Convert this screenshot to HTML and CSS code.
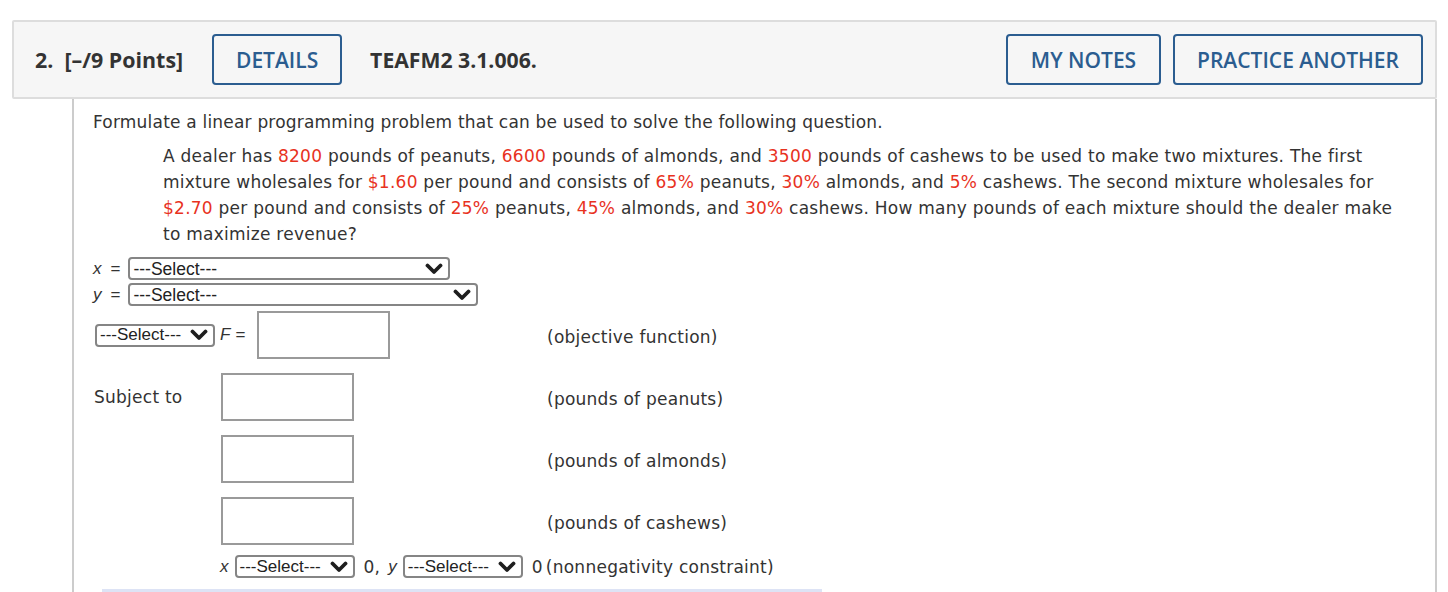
FILE: index.html
```html
<!DOCTYPE html>
<html>
<head>
<meta charset="utf-8">
<link rel="stylesheet" href="styles.css">
</head>
<body>
<div class="question">
  <div class="qhead">
    <div class="qnum">2.&nbsp; [–/9 Points]</div>
    <div class="btn btn-details">DETAILS</div>
    <div class="qcode">TEAFM2 3.1.006.</div>
    <div class="spacer"></div>
    <div class="btn btn-notes">MY NOTES</div>
    <div class="btn btn-practice">PRACTICE ANOTHER</div>
  </div>
  <div class="qbody">
    <p class="intro">Formulate a linear programming problem that can be used to solve the following question.</p>
    <p class="problem">A dealer has <span class="red">8200</span> pounds of peanuts, <span class="red">6600</span> pounds of almonds, and <span class="red">3500</span> pounds of cashews to be used to make two mixtures. The first mixture wholesales for <span class="red">$1.60</span> per pound and consists of <span class="red">65%</span> peanuts, <span class="red">30%</span> almonds, and <span class="red">5%</span> cashews. The second mixture wholesales for <span class="red">$2.70</span> per pound and consists of <span class="red">25%</span> peanuts, <span class="red">45%</span> almonds, and <span class="red">30%</span> cashews. How many pounds of each mixture should the dealer make to maximize revenue?</p>

    <div class="defs">
      <div class="defrow"><span class="var">x</span><span class="eq">=</span>
        <div class="sel sel-x"><span>---Select---</span><svg class="chev" viewBox="0 0 18 12"><polyline points="2.5,2.5 9,9 15.5,2.5"/></svg></div>
      </div>
      <div class="defrow"><span class="var">y</span><span class="eq">=</span>
        <div class="sel sel-y"><span>---Select---</span><svg class="chev" viewBox="0 0 18 12"><polyline points="2.5,2.5 9,9 15.5,2.5"/></svg></div>
      </div>
    </div>

    <div class="lp">
      <div class="lprow obj">
        <div class="lpleft">
          <div class="sel sel-s"><span>---Select---</span><svg class="chev" viewBox="0 0 18 12"><polyline points="2.5,2.5 9,9 15.5,2.5"/></svg></div>
          <span class="var fvar">F</span><span class="eq">=</span>
          <div class="box"></div>
        </div>
        <div class="lplabel">(objective function)</div>
      </div>
      <div class="lprow con">
        <div class="lpleft"><span class="subj">Subject to</span><div class="box"></div></div>
        <div class="lplabel">(pounds of peanuts)</div>
      </div>
      <div class="lprow con">
        <div class="lpleft"><span class="subj"></span><div class="box"></div></div>
        <div class="lplabel">(pounds of almonds)</div>
      </div>
      <div class="lprow con">
        <div class="lpleft"><span class="subj"></span><div class="box"></div></div>
        <div class="lplabel">(pounds of cashews)</div>
      </div>
      <div class="nonneg">
        <span class="var">x</span>
        <div class="sel sel-s"><span>---Select---</span><svg class="chev" viewBox="0 0 18 12"><polyline points="2.5,2.5 9,9 15.5,2.5"/></svg></div>
        <span class="num">0,</span><span class="var">y</span>
        <div class="sel sel-s"><span>---Select---</span><svg class="chev" viewBox="0 0 18 12"><polyline points="2.5,2.5 9,9 15.5,2.5"/></svg></div>
        <span class="num last">0</span><span class="nnlabel">(nonnegativity constraint)</span>
      </div>
    </div>
    <div class="hintbar"></div>
  </div>
</div>
</body>
</html>
```

FILE: styles.css
```css
html, body {
  margin: 0;
  padding: 0;
  background: #ffffff;
}
body {
  font-family: "DejaVu Sans", Verdana, sans-serif;
  color: #333333;
}
.question {
  margin: 20px 11px 0 12px;
}
.qhead {
  box-sizing: border-box;
  height: 79px;
  border: 2px solid #dddddd;
  border-radius: 2px;
  background: #f6f6f6;
  display: flex;
  align-items: center;
  padding: 0 12px 0 21px;
  font-family: "Open Sans", sans-serif;
}
.qnum {
  font-weight: 700;
  font-size: 21.4px;
  color: #333333;
  margin-right: 29px;
}
.qcode {
  font-weight: 700;
  font-size: 21.2px;
  color: #333333;
  margin-left: 28px;
}
.spacer { flex: 1; }
.btn {
  box-sizing: border-box;
  height: 51px;
  border: 2px solid #2b5d90;
  border-radius: 4px;
  color: #2b5d90;
  font-weight: 600;
  font-size: 21px;
  display: flex;
  align-items: center;
  justify-content: center;
}
.btn-details { width: 130px; }
.btn-notes { width: 155px; margin-right: 12px; }
.btn-practice { width: 250px; }

.qbody {
  margin-left: 60px;
  border-left: 2px solid #cccccc;
  border-right: 2px solid #cccccc;
  padding: 10px 0 0 19px;
  font-size: 17px;
  letter-spacing: 0.25px;
  line-height: 26px;
}
.intro {
  margin: 0;
  letter-spacing: 0.2px;
}
.problem {
  margin: 8px 30px 0 70px;
}
.red { color: #e8321e; }

.defs {
  margin-top: 10px;
  display: flex;
  flex-direction: column;
  gap: 3px;
}
.defrow {
  display: flex;
  align-items: center;
  height: 23px;
}
.var {
  font-family: "Liberation Sans", Arial, sans-serif;
  font-style: italic;
  font-size: 17px;
  letter-spacing: 0;
}
.eq {
  font-family: "Liberation Sans", Arial, sans-serif;
  font-size: 17px;
  letter-spacing: 0;
  margin: 0 8px 0 9px;
}
.sel {
  box-sizing: border-box;
  height: 23px;
  border: 2px solid #858585;
  border-radius: 4px;
  display: flex;
  align-items: center;
  justify-content: space-between;
  padding: 0 5px 0 3px;
  font-family: "Liberation Sans", Arial, sans-serif;
  font-size: 17.5px;
  letter-spacing: 0;
  color: #222222;
  background: #ffffff;
}
.sel-x { width: 322px; }
.sel-y { width: 350px; }
.sel-s { width: 120px; font-size: 17px; }
.chev {
  width: 18px;
  height: 12px;
  flex: none;
  fill: none;
  stroke: #1e1e1e;
  stroke-width: 3.8;
  stroke-linecap: round;
  stroke-linejoin: round;
}

.lp {
  margin-top: 5px;
  display: flex;
  flex-direction: column;
  gap: 14px;
}
.lprow {
  display: flex;
  align-items: center;
}
.lpleft {
  width: 454px;
  display: flex;
  align-items: center;
}
.obj .sel-s { margin-left: 2px; }
.fvar { margin-left: 5px; }
.obj .eq { margin: 0 12px 0 5px; }
.box {
  box-sizing: border-box;
  width: 133px;
  height: 48px;
  border: 2px solid #9a9a9a;
  background: #ffffff;
}
.subj {
  width: 127px;
  padding-left: 1px;
}
.lplabel {
  padding-top: 3px;
}
.nonneg {
  margin-top: -4px;
  display: flex;
  align-items: center;
  padding-left: 127px;
  height: 23px;
}
.nonneg .var { margin-right: 6px; }
.nonneg .num { margin: 0 8px 0 9px; }
.nonneg .num.last { margin: 0 3px 0 9px; }
.hintbar {
  margin: 11px 0 0 9px;
  width: 720px;
  height: 30px;
  background: #dde3f5;
}
```
